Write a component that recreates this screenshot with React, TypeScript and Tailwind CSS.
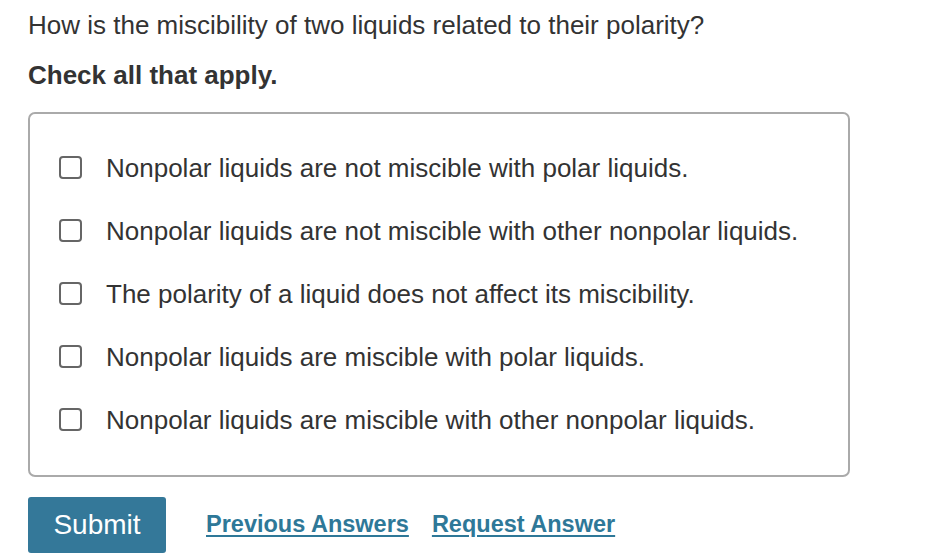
const OPTIONS = [
  'Nonpolar liquids are not miscible with polar liquids.',
  'Nonpolar liquids are not miscible with other nonpolar liquids.',
  'The polarity of a liquid does not affect its miscibility.',
  'Nonpolar liquids are miscible with polar liquids.',
  'Nonpolar liquids are miscible with other nonpolar liquids.',
]

export default function App() {
  return (
    <div className="min-h-[558px] w-[928px] bg-white pl-[28px] pt-[10px] font-['Liberation_Sans',Arial,sans-serif] text-[#333]">
      <p className="text-[26px] leading-[30px]">
        How is the miscibility of two liquids related to their polarity?
      </p>
      <p className="mt-[20px] text-[26px] font-bold leading-[30px]">Check all that apply.</p>

      <div className="mt-[22px] w-[822px] rounded-[7px] border-2 border-[#aaa] pb-[24px] pl-[29px] pr-[30px] pt-[22px]">
        {OPTIONS.map((o) => (
          <label key={o} className="flex h-[63px] items-center gap-[24px]">
            <span className="h-[23px] w-[23px] shrink-0 rounded-[4px] border-2 border-[#666] bg-white" />
            <span className="text-[26px] leading-[30px]">{o}</span>
          </label>
        ))}
      </div>

      <div className="mt-[20px] flex items-center">
        <button className="h-[56px] w-[138px] rounded-[3px] bg-[#347899] text-[28px] text-white">
          Submit
        </button>
        <a href="#" className="ml-[40px] text-[23.5px] font-bold text-[#2e7898] underline underline-offset-[3px]">
          Previous Answers
        </a>
        <a href="#" className="ml-[23px] text-[23.5px] font-bold text-[#2e7898] underline underline-offset-[3px]">
          Request Answer
        </a>
      </div>
    </div>
  )
}
